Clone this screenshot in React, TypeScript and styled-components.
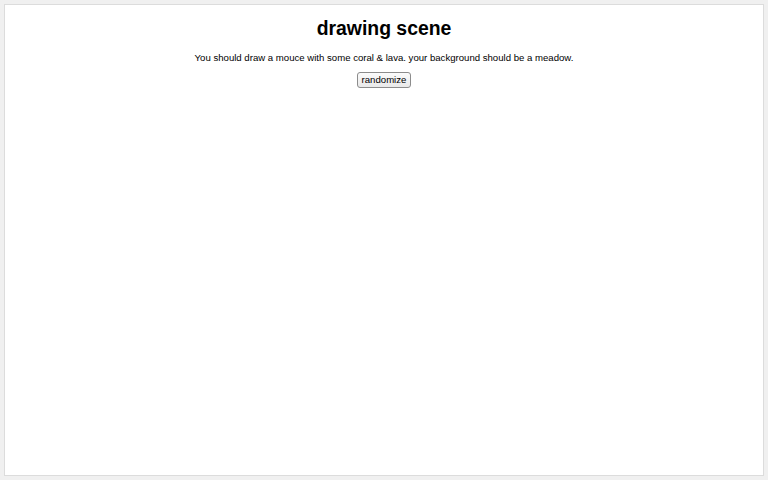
import React from "react";
import styled, { createGlobalStyle } from "styled-components";

const Global = createGlobalStyle`
  html, body { margin: 0; padding: 0; background: #f0f0f0; }
  body { font-family: "Liberation Sans", Arial, sans-serif; }
`;

const Page = styled.div`
  box-sizing: border-box;
  height: 480px;
  padding: 4px;
  display: flex;
`;

const Panel = styled.main`
  flex: 1;
  background: #ffffff;
  border: 1px solid #dcdcdc;
  display: flex;
  flex-direction: column;
  align-items: center;
  padding-top: 14px;
`;

const Title = styled.h1`
  margin: 0;
  font-size: 19.4px;
  font-weight: bold;
  color: #000;
  line-height: 18px;
`;

const Prompt = styled.p`
  margin: 15px 0 0;
  font-size: 9.6px;
  color: #000;
  line-height: 12px;
`;

const Button = styled.button`
  margin-top: 8px;
  font-family: "Liberation Sans", Arial, sans-serif;
  font-size: 9.6px;
  line-height: 11px;
  padding: 1px 4px 2px;
  background: linear-gradient(#fbfbfb, #e9e9e9);
  border: 1px solid #8c8c8c;
  border-radius: 3px;
  color: #000;
`;

export default function App() {
  return (
    <>
      <Global />
      <Page>
        <Panel>
          <Title>drawing scene</Title>
          <Prompt>
            You should draw a mouce with some coral &amp; lava. your background should be a meadow.
          </Prompt>
          <Button>randomize</Button>
        </Panel>
      </Page>
    </>
  );
}
